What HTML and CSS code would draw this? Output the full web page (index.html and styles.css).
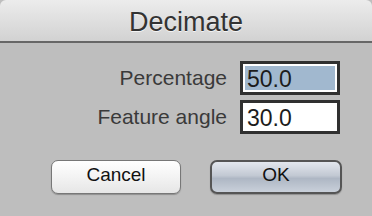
FILE: index.html
```html
<!DOCTYPE html>
<html lang="en">
<head>
    <meta charset="UTF-8">
    <meta name="viewport" content="width=device-width, initial-scale=1.0">
    <title>Decimate</title>
    <link rel="stylesheet" href="styles.css">
</head>
<body>

<div id="dialog">
    <div id="title-bar">Decimate</div>

    <div id="fields">
        <div class="field-row">
            <label class="field-label">Percentage</label>
            <div class="field-box"><span class="field-value selected">50.0</span></div>
        </div>
        <div class="field-row">
            <label class="field-label">Feature angle</label>
            <div class="field-box"><span class="field-value">30.0</span></div>
        </div>
    </div>

    <div id="buttons">
        <button class="dialog-button cancel-button">Cancel</button>
        <button class="dialog-button ok-button">OK</button>
    </div>
</div>

</body>
</html>
```

FILE: styles.css
```css
body {
    margin: 0;
    width: 372px;
    height: 216px;
    overflow: hidden;
    background-color: #bebebe;
    font-family: "Liberation Sans", Arial, sans-serif;
}

#dialog {
    height: 216px;
}

#title-bar {
    height: 38px;
    padding-top: 3px;
    line-height: 38px;
    text-align: center;
    font-size: 27px;
    color: #333;
    text-shadow: 0 1px 0 #f4f4f4;
    background: linear-gradient(#ececec, #d2d2d2);
    border-bottom: 2px solid #676767;
    border-radius: 6px 6px 0 0;
}

#fields {
    display: flex;
    flex-direction: column;
    gap: 5px;
    padding-top: 18px;
}

.field-row {
    display: flex;
    align-items: center;
}

.field-label {
    width: 227px;
    text-align: right;
    font-size: 21px;
    color: #3a3a3a;
}

.field-box {
    box-sizing: border-box;
    width: 100px;
    height: 34px;
    margin-left: 13px;
    border: 3px solid #303030;
    padding: 2px;
    background-color: #fff;
    display: flex;
}

.field-value {
    flex: 1;
    padding-left: 2px;
    font-size: 23px;
    line-height: 26px;
    color: #1c1c1c;
}

.field-value.selected {
    background-color: #a1b8cf;
}

#buttons {
    display: flex;
    gap: 29px;
    padding-left: 51px;
    margin-top: 26px;
}

.dialog-button {
    height: 34px;
    border-radius: 7px;
    font-family: "Liberation Sans", Arial, sans-serif;
    font-size: 19px;
    color: #111;
    padding: 0 0 4px 0;
    box-shadow: 0 1px 1px rgba(0, 0, 0, 0.25);
}

.cancel-button {
    width: 130px;
    border: 1px solid #777;
    background: linear-gradient(#ffffff, #f3f3f3 50%, #e6e6e6);
}

.ok-button {
    width: 132px;
    border: 2px solid #555;
    background: linear-gradient(#e3e7ee, #c2c9d3 45%, #aeb7c4 55%, #c9d0da);
}
```
